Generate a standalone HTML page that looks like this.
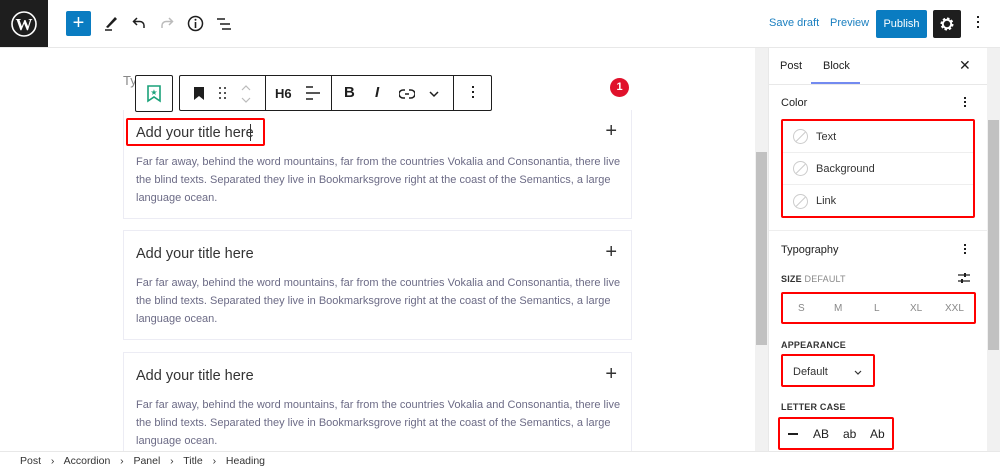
<!DOCTYPE html>
<html><head><meta charset="utf-8"><style>
*{box-sizing:border-box;margin:0;padding:0}
body{width:1000px;height:470px;overflow:hidden;background:#fff;font-family:"Liberation Sans",sans-serif;color:#1e1e1e;position:relative}
.a{position:absolute}
.p{font-size:11px;color:#6c6b86;line-height:18px;width:490px}
.t{font-size:14.5px;color:#333}
.blk{position:absolute;left:123px;width:509px;border:1px solid #ececf4}
.plus{position:absolute;right:14px;font-size:20px;color:#333;font-weight:300}
.red{position:absolute;border:2px solid #f00;border-radius:2px}
.lbl{font-size:9px;font-weight:bold;color:#333;letter-spacing:.2px}
.row{position:absolute;left:0;right:0;height:32px;font-size:11px;color:#333;display:flex;align-items:center;padding-left:10px}
.circ{width:15px;height:15px;border:1px solid #ccc;border-radius:50%;margin-right:8px;position:relative;overflow:hidden}
.circ:after{content:"";position:absolute;left:6px;top:-2px;width:1px;height:18px;background:#ccc;transform:rotate(45deg)}
.sep{position:absolute;top:0;bottom:0;width:1px;background:#1e1e1e}
</style></head><body>
<!-- top bar -->
<div class="a" style="left:0;top:0;width:48px;height:48px;background:#1e1e1e"></div>
<svg class="a" style="left:11px;top:11px" width="26" height="26" viewBox="0 0 26 26"><circle cx="13" cy="13" r="12" fill="none" stroke="#fff" stroke-width="1.6"/><text x="13" y="19" text-anchor="middle" font-family="Liberation Serif" font-weight="bold" font-size="17" fill="#fff">W</text></svg>
<div class="a" style="left:0;top:47px;width:1000px;height:1px;background:#e8e8e8"></div>
<div class="a" style="left:66px;top:11px;width:25px;height:25px;background:#0a7cc1;border-radius:2px;color:#fff;font-size:20px;line-height:24px;text-align:center">+</div>
<svg class="a" style="left:103px;top:14px" width="16" height="18"><path d="M3 13 L12 3 L14 5 L5 14 Z" fill="#1e1e1e"/><path d="M2 16 H9" stroke="#1e1e1e" stroke-width="1.5"/></svg>
<svg class="a" style="left:132px;top:16px" width="14" height="14"><path d="M5 2 L1.5 5.5 L5 9 M1.5 5.5 H8 A4 4 0 0 1 12 9.5 V12" fill="none" stroke="#1e1e1e" stroke-width="1.5"/></svg>
<svg class="a" style="left:160px;top:16px" width="14" height="14"><path d="M9 2 L12.5 5.5 L9 9 M12.5 5.5 H6 A4 4 0 0 0 2 9.5 V12" fill="none" stroke="#bbb" stroke-width="1.5"/></svg>
<svg class="a" style="left:187px;top:15px" width="17" height="17"><circle cx="8.5" cy="8.5" r="7" fill="none" stroke="#1e1e1e" stroke-width="1.5"/><path d="M8.5 7 V13" stroke="#1e1e1e" stroke-width="1.6"/><circle cx="8.5" cy="4.7" r="1" fill="#1e1e1e"/></svg>
<svg class="a" style="left:216px;top:17px" width="16" height="14"><path d="M1 2 H9 M4 7 H14 M6 12 H15" stroke="#1e1e1e" stroke-width="1.5"/></svg>
<div class="a" style="left:769px;top:17px;font-size:11px;color:#1a7fc0">Save draft</div>
<div class="a" style="left:830px;top:17px;font-size:11px;color:#1a7fc0">Preview</div>
<div class="a" style="left:876px;top:10px;width:51px;height:28px;background:#0a7cc1;border-radius:2px;color:#fff;font-size:11px;line-height:28px;text-align:center">Publish</div>
<div class="a" style="left:933px;top:10px;width:28px;height:28px;background:#1e1e1e;border-radius:2px"></div>
<svg class="a" style="left:939px;top:16px" width="16" height="16" viewBox="0 0 16 16"><circle cx="8" cy="8" r="5" fill="none" stroke="#fff" stroke-width="3" stroke-dasharray="2.2 1.7"/><circle cx="8" cy="8" r="4.2" fill="none" stroke="#fff" stroke-width="2"/></svg>
<div class="a" style="left:977px;top:16px;width:2px;height:2px;background:#1e1e1e;box-shadow:0 5px #1e1e1e,0 10px #1e1e1e"></div>

<!-- editor -->
<div class="a" style="left:123px;top:73px;font-size:13px;color:#888">Ty</div>
<div class="a" style="left:135px;top:75px;width:38px;height:37px;border:1px solid #1e1e1e;border-radius:2px;background:#fff"></div>
<svg class="a" style="left:146px;top:85px" width="16" height="18"><path d="M2 1 H14 V16 L8 12 L2 16 Z" fill="none" stroke="#1aa27a" stroke-width="1.6"/><text x="8" y="10" text-anchor="middle" font-size="8" fill="#1aa27a">★</text></svg>
<div class="a" style="left:179px;top:75px;width:313px;height:36px;border:1px solid #1e1e1e;border-radius:2px;background:#fff">
 <div class="sep" style="left:85px"></div><div class="sep" style="left:151px"></div><div class="sep" style="left:273px"></div>
 <svg class="a" style="left:14px;top:11px" width="10" height="13"><path d="M0 0 H10 V13 L5 9 L0 13Z" fill="#1e1e1e"/></svg>
 <div class="a" style="left:39px;top:11px;width:2px;height:2px;background:#555;box-shadow:5px 0 #555,0 5px #555,5px 5px #555,0 10px #555,5px 10px #555"></div>
 <svg class="a" style="left:60px;top:8px" width="12" height="20"><path d="M2 6 L6 2 L10 6 M2 14 L6 18 L10 14" fill="none" stroke="#bbb" stroke-width="1.2"/></svg>
 <div class="a" style="left:95px;top:10px;font-size:13px;font-weight:bold">H6</div>
 <svg class="a" style="left:125px;top:10px" width="16" height="14"><path d="M1 1 H8 M1 7 H15 M1 13 H8" stroke="#1e1e1e" stroke-width="1.5"/></svg>
 <div class="a" style="left:164px;top:8px;font-size:15px;font-weight:bold">B</div>
 <div class="a" style="left:195px;top:8px;font-size:15px;font-style:italic;font-weight:bold">I</div>
 <svg class="a" style="left:219px;top:12px" width="16" height="12"><path d="M6 2 H4 A4 4 0 0 0 4 10 H6 M10 2 H12 A4 4 0 0 1 12 10 H10 M6 6 H10" fill="none" stroke="#1e1e1e" stroke-width="1.5"/></svg>
 <svg class="a" style="left:249px;top:15px" width="10" height="7"><path d="M1 1 L5 5 L9 1" fill="none" stroke="#1e1e1e" stroke-width="1.5"/></svg>
 <div class="a" style="left:292px;top:10px;width:2px;height:2px;background:#1e1e1e;box-shadow:0 5px #1e1e1e,0 10px #1e1e1e"></div>
</div>
<div class="a" style="left:610px;top:78px;width:19px;height:19px;border-radius:50%;background:#e0112b;color:#fff;font-size:11px;font-weight:bold;line-height:19px;text-align:center">1</div>

<div class="blk" style="top:110px;height:109px;border-top:none">
 <div class="a t" style="left:12px;top:15px">Add your title here</div><div class="plus" style="top:10px">+</div>
 <div class="a p" style="left:12px;top:43px">Far far away, behind the word mountains, far from the countries Vokalia and Consonantia, there live the blind texts. Separated they live in Bookmarksgrove right at the coast of the Semantics, a large language ocean.</div>
</div>
<div class="red" style="left:126px;top:118px;width:139px;height:28px"></div>
<div class="a" style="left:250px;top:124px;width:1px;height:17px;background:#333"></div>
<div class="blk" style="top:230px;height:110px">
 <div class="a t" style="left:12px;top:15px">Add your title here</div><div class="plus" style="top:10px">+</div>
 <div class="a p" style="left:12px;top:43px">Far far away, behind the word mountains, far from the countries Vokalia and Consonantia, there live the blind texts. Separated they live in Bookmarksgrove right at the coast of the Semantics, a large language ocean.</div>
</div>
<div class="blk" style="top:352px;height:110px">
 <div class="a t" style="left:12px;top:15px">Add your title here</div><div class="plus" style="top:10px">+</div>
 <div class="a p" style="left:12px;top:43px">Far far away, behind the word mountains, far from the countries Vokalia and Consonantia, there live the blind texts. Separated they live in Bookmarksgrove right at the coast of the Semantics, a large language ocean.</div>
</div>

<!-- scrollbars -->
<div class="a" style="left:755px;top:48px;width:13px;height:403px;background:#f1f1f1"><div class="a" style="left:1px;top:104px;width:11px;height:193px;background:#c1c1c1"></div></div>
<div class="a" style="left:987px;top:48px;width:13px;height:403px;background:#f1f1f1"><div class="a" style="left:1px;top:72px;width:11px;height:230px;background:#c1c1c1"></div></div>
<div class="a" style="left:768px;top:48px;width:1px;height:403px;background:#e8e8e8"></div>

<!-- sidebar -->
<div class="a" style="left:780px;top:60px;font-size:11px">Post</div>
<div class="a" style="left:823px;top:60px;font-size:11px">Block</div>
<div class="a" style="left:811px;top:82px;width:49px;height:2px;background:#3858e9;opacity:.7"></div>
<div class="a" style="left:769px;top:84px;width:218px;height:1px;background:#e8e8e8"></div>
<div class="a" style="left:959px;top:57px;font-size:14px">✕</div>
<div class="a" style="left:781px;top:97px;font-size:11px">Color</div>
<div class="a" style="left:964px;top:97px;width:2px;height:2px;background:#1e1e1e;box-shadow:0 4px #1e1e1e,0 8px #1e1e1e"></div>
<div class="a" style="left:783px;top:121px;width:190px;height:95px">
 <div class="row" style="top:0;border-bottom:1px solid #eee"><span class="circ"></span>Text</div>
 <div class="row" style="top:32px;border-bottom:1px solid #eee"><span class="circ"></span>Background</div>
 <div class="row" style="top:64px"><span class="circ"></span>Link</div>
</div>
<div class="red" style="left:781px;top:119px;width:194px;height:99px"></div>
<div class="a" style="left:769px;top:230px;width:218px;height:1px;background:#eee"></div>
<div class="a" style="left:781px;top:244px;font-size:11px">Typography</div>
<div class="a" style="left:964px;top:244px;width:2px;height:2px;background:#1e1e1e;box-shadow:0 4px #1e1e1e,0 8px #1e1e1e"></div>
<div class="a lbl" style="left:781px;top:274px">SIZE <span style="font-weight:normal;color:#888">DEFAULT</span></div>
<svg class="a" style="left:957px;top:271px" width="14" height="14"><path d="M1 4 H13 M1 10 H13" stroke="#1e1e1e" stroke-width="1.2"/><rect x="7" y="2" width="2" height="4" fill="#1e1e1e"/><rect x="4" y="8" width="2" height="4" fill="#1e1e1e"/></svg>
<div class="red" style="left:781px;top:292px;width:195px;height:32px"></div>
<div class="a" style="left:798px;top:303px;font-size:10px;color:#888">S</div>
<div class="a" style="left:834px;top:303px;font-size:10px;color:#888">M</div>
<div class="a" style="left:874px;top:303px;font-size:10px;color:#888">L</div>
<div class="a" style="left:910px;top:303px;font-size:10px;color:#888">XL</div>
<div class="a" style="left:945px;top:303px;font-size:10px;color:#888">XXL</div>
<div class="a lbl" style="left:781px;top:340px">APPEARANCE</div>
<div class="red" style="left:781px;top:354px;width:94px;height:33px"></div>
<div class="a" style="left:793px;top:366px;font-size:11px;color:#333">Default</div>
<svg class="a" style="left:854px;top:370px" width="8" height="5"><path d="M1 1 L4 4 L7 1" fill="none" stroke="#333" stroke-width="1.2"/></svg>
<div class="a lbl" style="left:781px;top:402px">LETTER CASE</div>
<div class="red" style="left:778px;top:417px;width:116px;height:33px"></div>
<div class="a" style="left:788px;top:433px;width:10px;height:1.5px;background:#1e1e1e"></div>
<div class="a" style="left:813px;top:427px;font-size:12px">AB</div>
<div class="a" style="left:843px;top:427px;font-size:12px">ab</div>
<div class="a" style="left:870px;top:427px;font-size:12px">Ab</div>

<!-- footer -->
<div class="a" style="left:0;top:451px;width:1000px;height:19px;background:#fff;border-top:1px solid #e8e8e8"></div>
<div class="a" style="left:20px;top:455px;font-size:10.5px;color:#333;word-spacing:2px">Post &nbsp;›&nbsp; Accordion &nbsp;›&nbsp; Panel &nbsp;›&nbsp; Title &nbsp;›&nbsp; Heading</div>
</body></html>
